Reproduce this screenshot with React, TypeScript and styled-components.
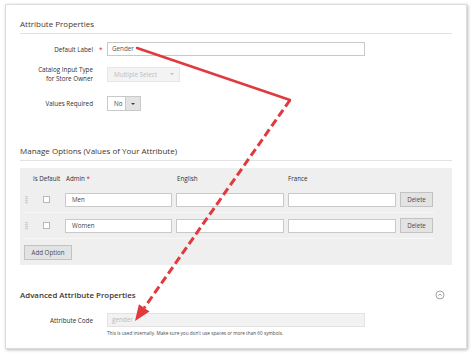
import React from 'react'
import styled, { createGlobalStyle } from 'styled-components'

const GlobalStyle = createGlobalStyle`
  html, body {
    margin: 0;
    padding: 0;
    background: #ffffff;
  }
  body {
    font-family: 'Open Sans', 'Liberation Sans', sans-serif;
    color: #333333;
  }
`

const Page = styled.div`
  position: relative;
  width: 474px;
  height: 354px;
  padding: 4px 0 0 5px;
  box-sizing: border-box;
`

const Card = styled.div`
  width: 462px;
  height: 345px;
  box-sizing: border-box;
  border: 1px solid #dcdcdc;
  box-shadow: 1px 1px 3px rgba(0, 0, 0, 0.28);
  background: #ffffff;
  padding: 0 14px 0 14px;
`

const SectionTitle = styled.div<{ $mt: number; $bold?: boolean; $line?: boolean }>`
  margin-top: ${(p) => p.$mt}px;
  font-size: ${(p) => (p.$bold ? 7.9 : 8)}px;
  font-weight: ${(p) => (p.$bold ? 600 : 400)};
  line-height: 12px;
  color: #41362f;
  padding-bottom: 3px;
  border-bottom: 1px solid ${(p) => (p.$line ? '#e3e3e3' : 'transparent')};
  display: flex;
  align-items: center;
  justify-content: space-between;
  padding-right: 7px;
`

const FieldRow = styled.div<{ $mt: number }>`
  margin-top: ${(p) => p.$mt}px;
  display: flex;
  align-items: center;
`

const Label = styled.div<{ $required?: boolean }>`
  width: 73px;
  flex: none;
  text-align: right;
  font-size: 6.3px;
  line-height: 9px;
  color: #303030;
  position: relative;
  &::after {
    content: ${(p) => (p.$required ? "'*'" : 'none')};
    position: absolute;
    left: 79px;
    top: 0;
    color: #e22626;
    font-size: 6.3px;
  }
`

const Control = styled.div`
  margin-left: 14px;
  display: flex;
  flex-direction: column;
`

const TextInput = styled.div<{ $w: number; $disabled?: boolean }>`
  width: ${(p) => p.$w}px;
  height: 14px;
  box-sizing: border-box;
  border: 1px solid ${(p) => (p.$disabled ? '#e2e2e2' : '#c9c9c9')};
  background: ${(p) => (p.$disabled ? '#f2f2f2' : '#ffffff')};
  color: ${(p) => (p.$disabled ? '#b9b9b9' : '#555555')};
  font-size: 6.3px;
  line-height: 12px;
  padding-left: 4px;
`

const Select = styled.div<{ $w: number; $disabled?: boolean }>`
  width: ${(p) => p.$w}px;
  height: 15px;
  box-sizing: border-box;
  border: 1px solid ${(p) => (p.$disabled ? '#e6e6e6' : '#c9c9c9')};
  background: ${(p) => (p.$disabled ? '#f3f3f3' : '#ffffff')};
  display: flex;
  font-size: 6.3px;
  line-height: 13px;
  color: ${(p) => (p.$disabled ? '#bdbdbd' : '#444444')};
`

const SelectValue = styled.div`
  flex: 1;
  padding-left: 6px;
`

const SelectArrow = styled.div<{ $disabled?: boolean }>`
  width: 14px;
  flex: none;
  background: ${(p) => (p.$disabled ? 'transparent' : '#e3e3e3')};
  border-left: 1px solid ${(p) => (p.$disabled ? 'transparent' : '#c9c9c9')};
  display: flex;
  align-items: center;
  justify-content: center;
  &::after {
    content: '';
    border-left: 2px solid transparent;
    border-right: 2px solid transparent;
    border-top: 2.5px solid ${(p) => (p.$disabled ? '#bdbdbd' : '#404040')};
  }
`

const Note = styled.div`
  margin-top: 3px;
  font-size: 4.7px;
  line-height: 6px;
  color: #4a4a4a;
  white-space: nowrap;
`

const Panel = styled.div`
  margin-top: 7px;
  background: #efefef;
  padding: 0 18px 5px 3px;
`

const Grid = styled.div`
  display: grid;
  grid-template-columns: 6px 28px 107px 108px 108px 33px;
  column-gap: 4px;
  align-items: center;
`

const HeadRow = styled(Grid)`
  height: 18px;
  padding-top: 1px;
  font-size: 6.2px;
  color: #303030;
`

const HeadCell = styled.div<{ $indent?: number }>`
  padding-left: ${(p) => p.$indent || 0}px;
  white-space: nowrap;
  span {
    color: #e22626;
  }
`

const OptionRow = styled(Grid)`
  padding: 5px 0 5px 0;
  border-bottom: 1px solid #f7f7f7;
`

const Handle = styled.div`
  width: 3px;
  height: 8px;
  margin-left: 2px;
  background: repeating-linear-gradient(#d0d0d0 0 1px, #e6e6e6 1px 2px);
`

const Checkbox = styled.div`
  width: 7px;
  height: 7px;
  box-sizing: border-box;
  border: 1px solid #b8b8b8;
  background: #ffffff;
  justify-self: center;
  margin-left: -1px;
`

const CellInput = styled.div`
  height: 14px;
  box-sizing: border-box;
  border: 1px solid #c9c9c9;
  background: #ffffff;
  font-size: 6.2px;
  line-height: 12px;
  padding-left: 6px;
  color: #444444;
`

const Button = styled.div<{ $w: number }>`
  width: ${(p) => p.$w}px;
  height: 15px;
  box-sizing: border-box;
  border: 1px solid #c2c2c2;
  background: #e3e3e3;
  font-size: 6.2px;
  line-height: 13px;
  text-align: center;
  color: #514943;
`

const Footer = styled.div`
  padding: 6px 0 0 1px;
`

const CollapseIcon = styled.svg`
  width: 10px;
  height: 10px;
`

const Overlay = styled.svg`
  position: absolute;
  left: 0;
  top: 0;
  pointer-events: none;
`

const options = ['Men', 'Women']

export default function App() {
  return (
    <>
      <GlobalStyle />
      <Page>
        <Card>
          <SectionTitle $mt={13} $line>
            Attribute Properties
          </SectionTitle>

          <FieldRow $mt={8}>
            <Label $required>Default Label</Label>
            <Control>
              <TextInput $w={258}>Gender</TextInput>
            </Control>
          </FieldRow>

          <FieldRow $mt={9}>
            <Label>
              Catalog Input Type
              <br />
              for Store Owner
            </Label>
            <Control>
              <Select $w={73} $disabled>
                <SelectValue>Multiple Select</SelectValue>
                <SelectArrow $disabled />
              </Select>
            </Control>
          </FieldRow>

          <FieldRow $mt={13}>
            <Label>Values Required</Label>
            <Control>
              <Select $w={34}>
                <SelectValue>No</SelectValue>
                <SelectArrow />
              </Select>
            </Control>
          </FieldRow>

          <SectionTitle $mt={34} $line>
            Manage Options (Values of Your Attribute)
          </SectionTitle>

          <Panel>
            <HeadRow>
              <div />
              <HeadCell $indent={0}>Is Default</HeadCell>
              <HeadCell $indent={1}>
                Admin <span>*</span>
              </HeadCell>
              <HeadCell $indent={1}>English</HeadCell>
              <HeadCell>France</HeadCell>
              <div />
            </HeadRow>
            {options.map((name) => (
              <OptionRow key={name}>
                <Handle />
                <Checkbox />
                <CellInput>{name}</CellInput>
                <CellInput />
                <CellInput />
                <Button $w={33}>Delete</Button>
              </OptionRow>
            ))}
            <Footer>
              <Button $w={48}>Add Option</Button>
            </Footer>
          </Panel>

          <SectionTitle $mt={24} $bold>
            Advanced Attribute Properties
            <CollapseIcon viewBox="0 0 10 10">
              <circle cx="5" cy="5" r="4" fill="none" stroke="#8a8a8a" strokeWidth="0.8" />
              <path d="M3.2 5.8 L5 4 L6.8 5.8" fill="none" stroke="#8a8a8a" strokeWidth="0.8" />
            </CollapseIcon>
          </SectionTitle>

          <FieldRow $mt={8}>
            <Label>Attribute Code</Label>
            <Control>
              <TextInput $w={258} $disabled>
                gender
              </TextInput>
            </Control>
          </FieldRow>
          <FieldRow $mt={0}>
            <Label />
            <Control>
              <Note>This is used internally. Make sure you don't use spaces or more than 60 symbols.</Note>
            </Control>
          </FieldRow>
        </Card>

        <Overlay width="474" height="354" viewBox="0 0 474 354">
          <line x1="137" y1="48" x2="290" y2="100" stroke="#e0393e" strokeWidth="2.4" strokeLinecap="round" />
          <line
            x1="290"
            y1="100"
            x2="144.2"
            y2="307.9"
            stroke="#e0393e"
            strokeWidth="3"
            strokeDasharray="8 4"
          />
          <polygon points="135,321 149.5,311.6 138.9,304.2" fill="#e0393e" />
        </Overlay>
      </Page>
    </>
  )
}
